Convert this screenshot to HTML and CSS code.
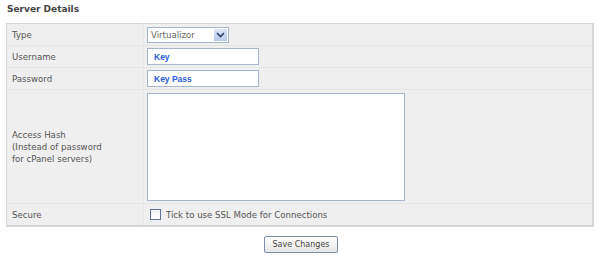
FILE: index.html
```html
<!DOCTYPE html>
<html>
<head>
    <meta charset="UTF-8">
    <title>Server Details</title>
    <link rel="stylesheet" href="styles.css">
</head>
<body>
    <h3 class="section-title">Server Details</h3>
    <table class="form-table">
        <tr>
            <td class="label">Type</td>
            <td class="field">
                <div class="select">
                    <span class="select-text">Virtualizor</span>
                    <span class="select-arrow">
                        <svg width="9" height="6" viewBox="0 0 9 6"><path d="M1 1 L4.5 4.5 L8 1" fill="none" stroke="#2b3f66" stroke-width="1.6"/></svg>
                    </span>
                </div>
            </td>
        </tr>
        <tr>
            <td class="label">Username</td>
            <td class="field"><input class="text-input" type="text" value="Key"></td>
        </tr>
        <tr>
            <td class="label">Password</td>
            <td class="field"><input class="text-input" type="text" value="Key Pass"></td>
        </tr>
        <tr class="tall">
            <td class="label">Access Hash<br>(Instead of password<br>for cPanel servers)</td>
            <td class="field"><textarea class="hash-input"></textarea></td>
        </tr>
        <tr class="last">
            <td class="label">Secure</td>
            <td class="field">
                <label class="check"><span class="check-box"></span>Tick to use SSL Mode for Connections</label>
            </td>
        </tr>
    </table>
    <div class="actions">
        <button class="save-button">Save Changes</button>
    </div>
</body>
</html>
```

FILE: styles.css
```css
body {
    margin: 0;
    font-family: "DejaVu Sans", Verdana, sans-serif;
    font-size: 8.6px;
    color: #555;
    background: #fff;
}
.section-title {
    margin: 0;
    padding: 4px 0 0 7px;
    height: 14px;
    font-size: 9px;
    font-weight: bold;
    color: #444;
}
.form-table {
    margin: 5px 0 0 6px;
    width: 588px;
    border-collapse: collapse;
    border: 1px solid #d6d6d6;
    border-right-width: 2px;
    border-bottom-width: 2px;
    background: #efefef;
}
.form-table td {
    height: 21px;
    padding: 0;
    border-bottom: 1px solid #e6e6e6;
    vertical-align: middle;
}
.form-table tr.last td {
    border-bottom: none;
}
.form-table tr.tall td {
    height: 113px;
}
.label {
    width: 131px;
    padding-left: 5px !important;
    border-right: 1px solid #e9e9e9;
    line-height: 12px;
}
.field {
    padding-left: 3px !important;
}
.select {
    display: flex;
    align-items: center;
    justify-content: space-between;
    width: 80px;
    height: 14px;
    border: 1px solid #a5b5cc;
    background: #fff;
    color: #666;
}
.select-text {
    padding-left: 3px;
}
.select-arrow {
    display: flex;
    align-items: center;
    justify-content: center;
    width: 13px;
    height: 12px;
    margin-right: 1px;
    background: linear-gradient(#dce6f7, #b9c9e8);
}
.text-input {
    display: block;
    box-sizing: border-box;
    width: 112px;
    height: 17px;
    margin: 0;
    padding: 0 0 0 6px;
    border: 1px solid #a5b5cc;
    font-family: "Liberation Sans", Arial, sans-serif;
    font-size: 8.5px;
    font-weight: bold;
    color: #2a5bd7;
    outline: none;
}
.hash-input {
    display: block;
    box-sizing: border-box;
    width: 258px;
    height: 108px;
    margin: 0;
    border: 1px solid #a5b5cc;
    resize: none;
    outline: none;
}
.check {
    display: flex;
    align-items: center;
}
.check-box {
    box-sizing: border-box;
    width: 11px;
    height: 11px;
    margin: 0 5px 0 3px;
    border: 1px solid #5f7495;
    background: linear-gradient(#f2f2f2, #fff);
}
.actions {
    text-align: center;
    padding-top: 9px;
}
.save-button {
    box-sizing: border-box;
    width: 74px;
    height: 17px;
    margin-left: 2px;
    padding: 0;
    border: 1px solid #7b8ea8;
    border-radius: 2px;
    background: linear-gradient(#ffffff, #e6e6e6);
    font-family: "DejaVu Sans", Verdana, sans-serif;
    font-size: 8px;
    color: #444;
}
```
